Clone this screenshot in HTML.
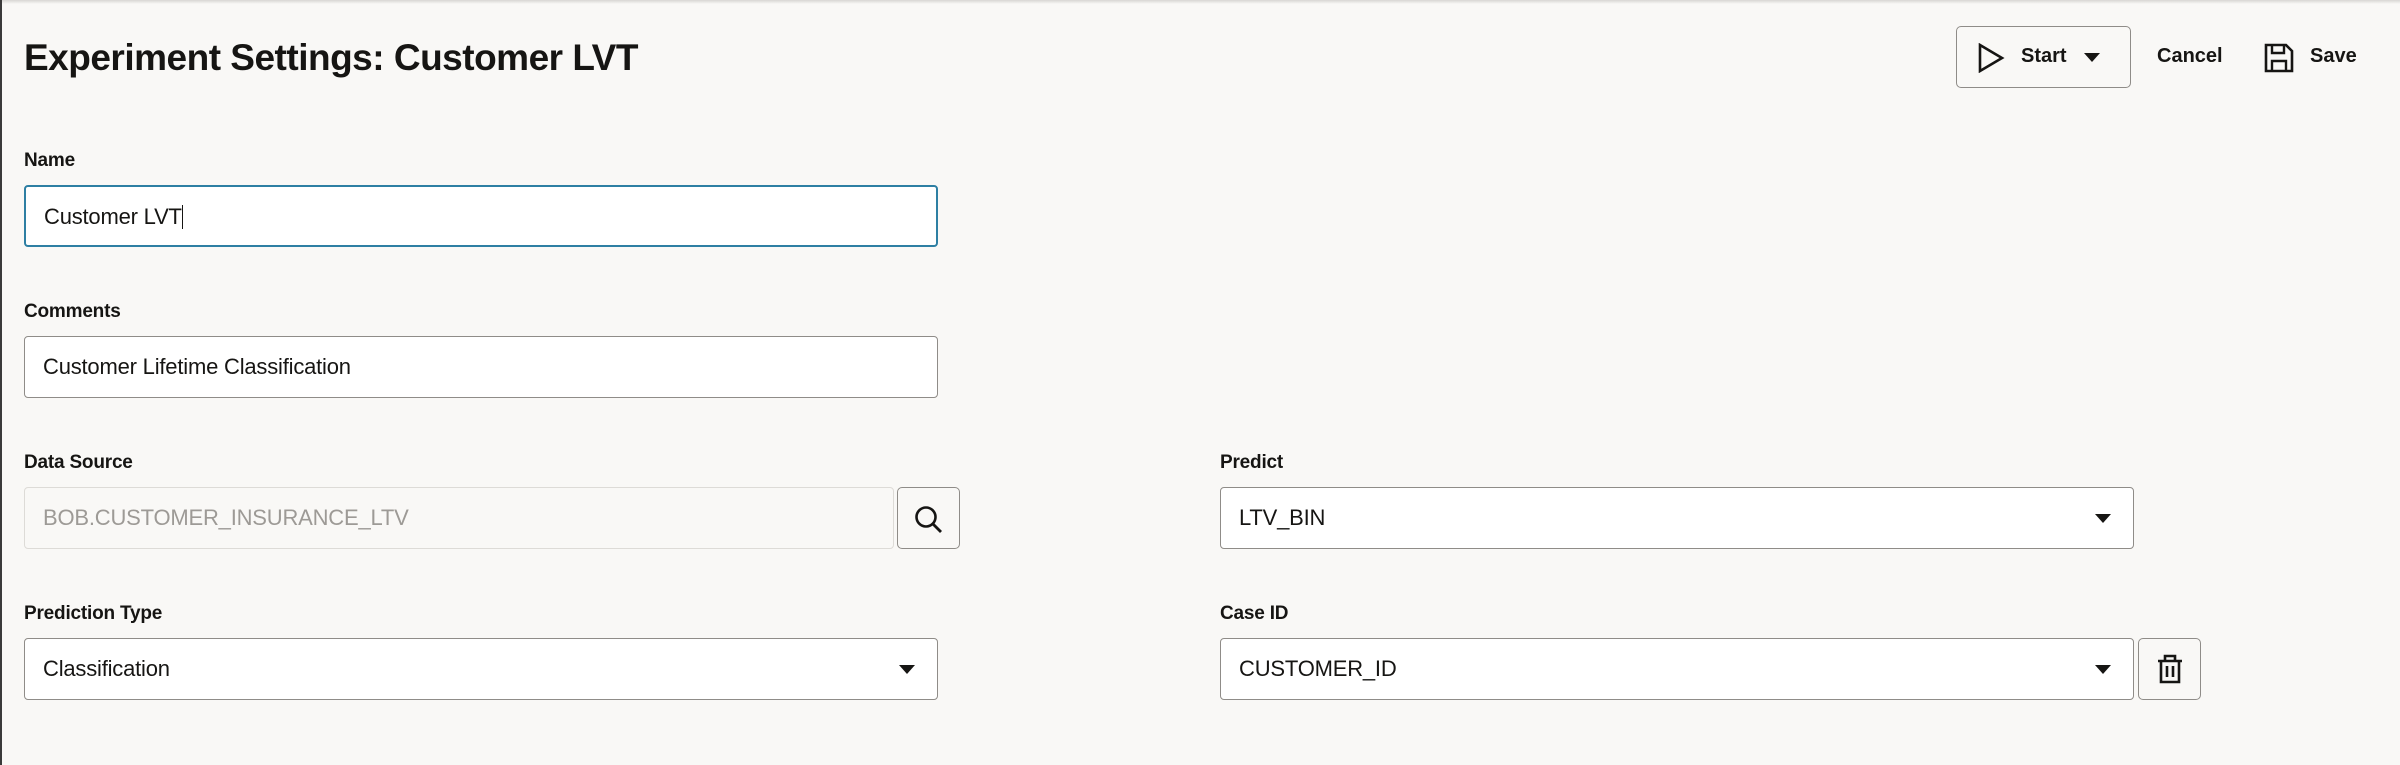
<!DOCTYPE html>
<html><head><meta charset="utf-8"><style>
*{box-sizing:border-box;margin:0;padding:0}
body{width:2400px;height:765px;background:#f9f8f6;font-family:"Liberation Sans",sans-serif;color:#161513;position:relative;overflow:hidden}
.abs{position:absolute}
.topsh{left:0;top:0;width:2400px;height:4px;background:linear-gradient(#d8d6d3,#f9f8f6)}
.left{left:0;top:0;width:2px;height:765px;background:#3a3a3a}
h1{position:absolute;left:24px;top:37px;font-size:37px;font-weight:900;letter-spacing:-0.5px}
.lbl{position:absolute;font-size:19px;font-weight:bold;letter-spacing:-0.2px}
.in{position:absolute;height:62px;background:#fff;border:1.5px solid #8f8c88;border-radius:4px;font-size:22px;padding-left:18px;line-height:59px;letter-spacing:-0.2px}
.caret{position:absolute;right:22px;top:26px;width:0;height:0;border-left:8px solid transparent;border-right:8px solid transparent;border-top:9px solid #161513}
.btn{position:absolute;height:62px;border:1.5px solid #8f8c88;border-radius:5px;background:#f9f8f6}
.bt{position:absolute;font-size:20px;font-weight:bold}
</style></head><body>
<div class="abs topsh"></div><div class="abs left"></div>
<h1>Experiment Settings: Customer LVT</h1>

<div class="btn" style="left:1956px;top:26px;width:175px;height:62px">
<svg class="abs" style="left:20px;top:16px" width="28" height="30" viewBox="0 0 28 30"><path d="M3 2 L25 15 L3 28 Z" fill="none" stroke="#161513" stroke-width="2.6"/></svg>
<span class="bt" style="left:64px;top:18px">Start</span>
<div class="caret" style="right:30px;top:26px"></div>
</div>
<span class="bt" style="left:2157px;top:45px">Cancel</span>
<svg class="abs" style="left:2264px;top:43px" width="30" height="30" viewBox="0 0 30 30"><path d="M2 2 H22 L28 8 V28 H2 Z" fill="none" stroke="#161513" stroke-width="2.6"/><path d="M8 2 V10 H20 V2 M8 28 V18 H22 V28" fill="none" stroke="#161513" stroke-width="2.4"/></svg>
<span class="bt" style="left:2310px;top:45px">Save</span>

<div class="lbl" style="left:24px;top:150px">Name</div>
<div class="in" style="left:24px;top:185px;width:914px;border-color:#2e7fa3;border-width:2px">Customer LVT<span style="display:inline-block;width:1.5px;height:24px;background:#161513;vertical-align:-5px"></span></div>

<div class="lbl" style="left:24px;top:301px">Comments</div>
<div class="in" style="left:24px;top:336px;width:914px">Customer Lifetime Classification</div>

<div class="lbl" style="left:24px;top:452px">Data Source</div>
<div class="in" style="left:24px;top:487px;width:870px;background:#f9f8f6;border-color:#dddbd7;color:#9d9a96">BOB.CUSTOMER_INSURANCE_LTV</div>
<div class="btn" style="left:897px;top:487px;width:63px">
<svg class="abs" style="left:15px;top:16px" width="32" height="32" viewBox="0 0 32 32"><circle cx="13" cy="13" r="9.5" fill="none" stroke="#161513" stroke-width="2.6"/><path d="M20 20 L28 28" stroke="#161513" stroke-width="2.8"/></svg>
</div>

<div class="lbl" style="left:1220px;top:452px">Predict</div>
<div class="in" style="left:1220px;top:487px;width:914px">LTV_BIN<div class="caret"></div></div>

<div class="lbl" style="left:24px;top:603px">Prediction Type</div>
<div class="in" style="left:24px;top:638px;width:914px">Classification<div class="caret"></div></div>

<div class="lbl" style="left:1220px;top:603px">Case ID</div>
<div class="in" style="left:1220px;top:638px;width:914px">CUSTOMER_ID<div class="caret"></div></div>
<div class="btn" style="left:2138px;top:638px;width:63px">
<svg class="abs" style="left:17px;top:14px" width="28" height="32" viewBox="0 0 28 32"><path d="M2 8 H26 M9 8 V3 H19 V8 M5 8 V29 H23 V8 M11 13 V24 M17 13 V24" fill="none" stroke="#161513" stroke-width="2.6"/></svg>
</div>
</body></html>
